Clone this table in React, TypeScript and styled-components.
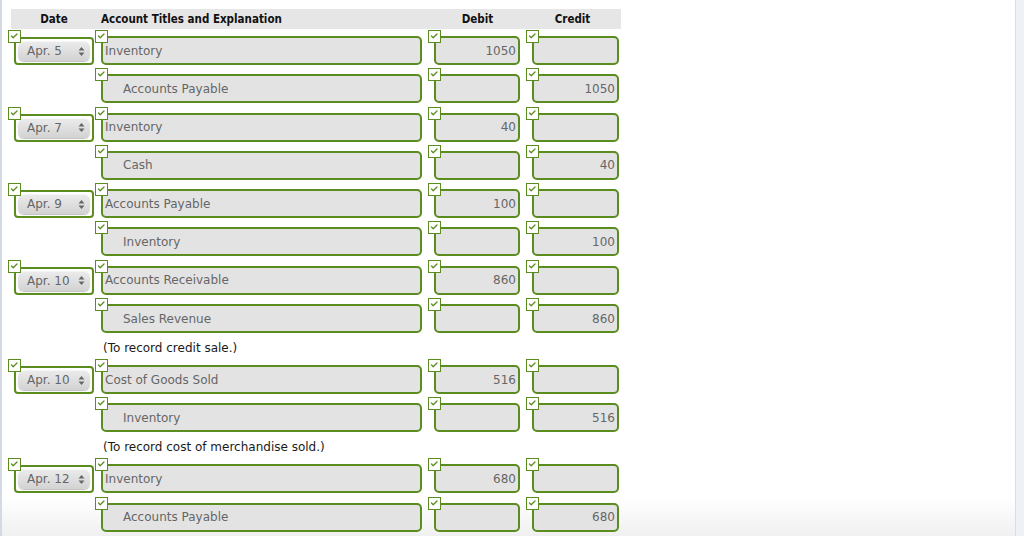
import React from "react";
import styled, { createGlobalStyle } from "styled-components";

const GREEN = "#5b8c1f";

const GlobalStyle = createGlobalStyle`
  html, body {
    margin: 0;
    padding: 0;
    background: #ffffff;
    font-family: "DejaVu Sans", Verdana, sans-serif;
  }
`;

// #region styled
const Page = styled.div`
  display: flex;
  height: 536px;
  overflow: hidden;
`;

const LeftEdge = styled.div`
  width: 2px;
  background: #d3dae4;
`;

const RightStrip = styled.div`
  width: 8px;
  background: #eef2f6;
  border-left: 1px solid #d9dee5;
`;

const Main = styled.div`
  flex: 1;
  padding-top: 9px;
  background: linear-gradient(to bottom, #ffffff 0, #ffffff 498px, #f0f0f0 536px);
`;

const HeaderRow = styled.div`
  display: grid;
  grid-template-columns: 86px 333px 95px 95px;
  margin-left: 9px;
  width: 610px;
  height: 20px;
  background: #e6e6e6;
  align-items: center;
  font-family: "DejaVu Sans Condensed", "Liberation Sans", sans-serif;
  font-weight: bold;
  font-size: 11.5px;
  color: #111;
`;

const HeaderCell = styled.div<{ $align?: "left" | "center" }>`
  text-align: ${(p) => p.$align || "center"};
  padding-left: ${(p) => (p.$align === "left" ? "4px" : "0")};
`;

const Body = styled.div`
  margin-left: 6px;
  padding-top: 1px;
  display: flex;
  flex-direction: column;
`;

const LineRow = styled.div`
  display: grid;
  grid-template-columns: 87px 333px 98px 95px;
  height: 38.3px;
`;

const Cell = styled.div`
  position: relative;
  padding: 6px 0 0 6px;
`;

const CheckBox = styled.div`
  position: absolute;
  top: 0;
  left: 0;
  width: 11px;
  height: 11px;
  background: #ffffff;
  border: 1px solid ${GREEN};
  display: flex;
  align-items: flex-start;
  justify-content: flex-start;
`;

const Field = styled.div<{ $w: number; $right?: boolean; $indent?: boolean }>`
  box-sizing: border-box;
  width: ${(p) => p.$w}px;
  height: 29px;
  border: 2px solid ${GREEN};
  border-radius: 5px;
  background: #e3e3e3;
  display: flex;
  align-items: center;
  justify-content: ${(p) => (p.$right ? "flex-end" : "flex-start")};
  padding: 0 2px 0 ${(p) => (p.$indent ? "20px" : "2px")};
  font-size: 12px;
  color: #666666;
  white-space: nowrap;
`;

const DateBox = styled.div`
  box-sizing: border-box;
  width: 80px;
  height: 28px;
  margin-top: 1px;
  border: 2px solid ${GREEN};
  border-radius: 4px;
  background: #ffffff;
  display: flex;
  align-items: center;
  padding-left: 2px;
`;

const DateSelect = styled.div`
  box-sizing: border-box;
  width: 72px;
  height: 20px;
  border-radius: 6px;
  background: linear-gradient(to bottom, #ececec 0%, #dedede 55%, #d2d2d2 100%);
  box-shadow: 0 1px 1px rgba(0, 0, 0, 0.25), inset 0 1px 0 #f6f6f6;
  display: flex;
  align-items: center;
  justify-content: space-between;
  padding: 0 5px 0 9px;
  font-size: 12px;
  color: #666666;
`;

const Note = styled.div`
  height: 22.7px;
  padding-left: 95px;
  display: flex;
  align-items: center;
  font-size: 12px;
  color: #1a1a1a;
`;
// #endregion

interface Line {
  account: string;
  debit?: string;
  credit?: string;
}

interface Entry {
  date: string;
  lines: Line[];
  note?: string;
}

const entries: Entry[] = [
  {
    date: "Apr. 5",
    lines: [
      { account: "Inventory", debit: "1050" },
      { account: "Accounts Payable", credit: "1050" },
    ],
  },
  {
    date: "Apr. 7",
    lines: [
      { account: "Inventory", debit: "40" },
      { account: "Cash", credit: "40" },
    ],
  },
  {
    date: "Apr. 9",
    lines: [
      { account: "Accounts Payable", debit: "100" },
      { account: "Inventory", credit: "100" },
    ],
  },
  {
    date: "Apr. 10",
    lines: [
      { account: "Accounts Receivable", debit: "860" },
      { account: "Sales Revenue", credit: "860" },
    ],
    note: "(To record credit sale.)",
  },
  {
    date: "Apr. 10",
    lines: [
      { account: "Cost of Goods Sold", debit: "516" },
      { account: "Inventory", credit: "516" },
    ],
    note: "(To record cost of merchandise sold.)",
  },
  {
    date: "Apr. 12",
    lines: [
      { account: "Inventory", debit: "680" },
      { account: "Accounts Payable", credit: "680" },
    ],
  },
];

const Check: React.FC = () => (
  <CheckBox>
    <svg width="11" height="11" viewBox="0 0 11 11">
      <polyline
        points="2.5,5 4.2,6.7 8,3"
        fill="none"
        stroke={GREEN}
        strokeWidth="1.3"
        strokeLinecap="round"
        strokeLinejoin="round"
      />
    </svg>
  </CheckBox>
);

const Arrows: React.FC = () => (
  <svg width="7" height="11" viewBox="0 0 7 11">
    <polygon points="3.5,1 6.5,4.5 0.5,4.5" fill="#666" />
    <polygon points="3.5,10 6.5,6.5 0.5,6.5" fill="#666" />
  </svg>
);

const JournalLine: React.FC<{ line: Line; date?: string; credit: boolean }> = ({
  line,
  date,
  credit,
}) => (
  <LineRow>
    <Cell>
      {date && (
        <>
          <Check />
          <DateBox>
            <DateSelect>
              <span>{date}</span>
              <Arrows />
            </DateSelect>
          </DateBox>
        </>
      )}
    </Cell>
    <Cell>
      <Check />
      <Field $w={321} $indent={credit}>
        {line.account}
      </Field>
    </Cell>
    <Cell>
      <Check />
      <Field $w={86} $right>
        {line.debit}
      </Field>
    </Cell>
    <Cell>
      <Check />
      <Field $w={87} $right>
        {line.credit}
      </Field>
    </Cell>
  </LineRow>
);

const App: React.FC = () => (
  <>
    <GlobalStyle />
    <Page>
      <LeftEdge />
      <Main>
        <HeaderRow>
          <HeaderCell>Date</HeaderCell>
          <HeaderCell $align="left">Account Titles and Explanation</HeaderCell>
          <HeaderCell>Debit</HeaderCell>
          <HeaderCell>Credit</HeaderCell>
        </HeaderRow>
        <Body>
          {entries.map((entry, i) => (
            <React.Fragment key={i}>
              {entry.lines.map((line, j) => (
                <JournalLine
                  key={j}
                  line={line}
                  date={j === 0 ? entry.date : undefined}
                  credit={j > 0}
                />
              ))}
              {entry.note && <Note>{entry.note}</Note>}
            </React.Fragment>
          ))}
        </Body>
      </Main>
      <RightStrip />
    </Page>
  </>
);

export default App;
